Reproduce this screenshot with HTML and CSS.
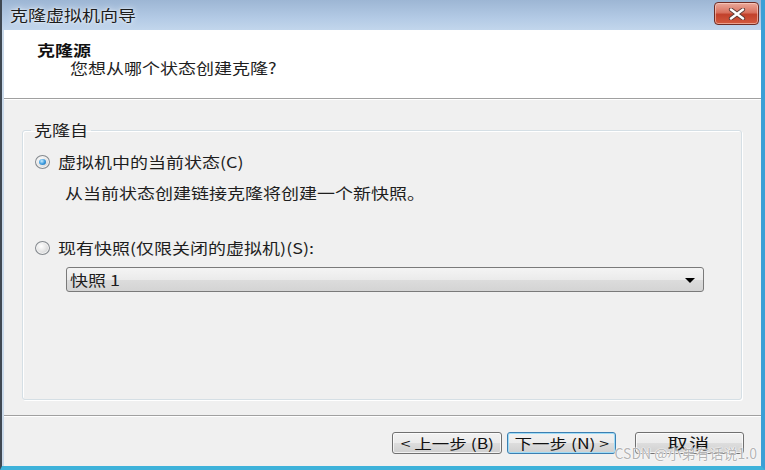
FILE: index.html
```html
<!DOCTYPE html>
<html lang="zh-CN">
<head>
<meta charset="utf-8">
<title>克隆虚拟机向导</title>
<link rel="stylesheet" href="styles.css">
</head>
<body>
<div class="window">
  <div class="titlebar">
    <span class="title t">克隆虚拟机向导</span>
    <button class="close" aria-label="关闭">
      <svg width="20" height="12" viewBox="0 0 20 12">
        <path d="M4 1.5 L16 10.5 M16 1.5 L4 10.5" stroke="#5a3a36" stroke-width="4.2" stroke-linecap="round"/>
        <path d="M4 1.5 L16 10.5 M16 1.5 L4 10.5" stroke="#ffffff" stroke-width="2.4" stroke-linecap="round"/>
      </svg>
    </button>
  </div>
  <div class="client">
    <div class="header">
      <div class="h-title"><span class="t">克隆源</span></div>
      <div class="h-sub"><span class="t">您想从哪个状态创建克隆?</span></div>
    </div>
    <div class="body">
      <fieldset class="group">
        <legend><span class="t">克隆自</span></legend>
        <label class="radio-row first">
          <span class="radio checked"></span>
          <span class="radio-text t">虚拟机中的当前状态(C)</span>
        </label>
        <div class="desc"><span class="t">从当前状态创建链接克隆将创建一个新快照。</span></div>
        <label class="radio-row second">
          <span class="radio"></span>
          <span class="radio-text t">现有快照(仅限关闭的虚拟机)(S):</span>
        </label>
        <div class="combo">
          <span class="combo-text"><span class="t">快照 1</span></span>
          <span class="combo-arrow"></span>
        </div>
      </fieldset>
    </div>
    <div class="footer">
      <button class="btn"><span class="bt">&lt; 上一步 (B)</span></button>
      <button class="btn default"><span class="bt">下一步 (N) &gt;</span></button>
      <button class="btn cancel"><span class="bt">取消</span></button>
    </div>
  </div>
  <div class="watermark">CSDN @小弟有话说1.0</div>
</div>
</body>
</html>
```
FILE: styles.css
```css
html, body {
  margin: 0;
  padding: 0;
  background: #ffffff;
}

body {
  font-family: "Noto Sans CJK SC", "Noto Sans", sans-serif;
  color: #1e1e1e;
}

/* horizontally stretched text, as in the reference capture */
.t {
  display: inline-block;
  transform: scaleX(1.2);
  transform-origin: left center;
  white-space: nowrap;
}

.window {
  position: relative;
  width: 765px;
  height: 470px;
  box-sizing: border-box;
  display: flex;
  flex-direction: column;
  border-left: 2px solid #3f4852;
  border-right: 4px solid #3b9fd6;
  border-bottom: 4px solid #3eb2da;
  overflow: hidden;
}

.titlebar {
  height: 30px;
  flex: none;
  display: flex;
  align-items: flex-start;
  background: linear-gradient(#9db6d4, #b3cae5 60%, #c2d6ec);
}

.title {
  margin: 5px 0 0 8px;
  font-size: 15px;
  line-height: 20px;
  color: #1c1c1c;
  text-shadow: 0 0 6px rgba(255, 255, 255, 0.9), 0 0 2px rgba(255, 255, 255, 0.8);
}

.close {
  margin: 2px 2px 0 auto;
  width: 45px;
  height: 23px;
  padding: 0;
  border: 1px solid #6e2d25;
  border-radius: 4px;
  background: linear-gradient(#eaa99b, #d9725f 45%, #c2412b 55%, #d35a3e);
  box-shadow: inset 0 0 0 1px rgba(255, 220, 210, 0.55);
  display: flex;
  align-items: center;
  justify-content: center;
}

.client {
  flex: 1;
  display: flex;
  flex-direction: column;
  border-left: 2px solid #c9d9ea;
  background: #f0f0f0;
}

.header {
  flex: none;
  background: #ffffff;
  border-bottom: 1px solid #a0a0a0;
  box-shadow: 0 1px 0 #ffffff;
  padding: 11px 0 0 33px;
  box-sizing: border-box;
  height: 69px;
}

.h-title {
  font-size: 15px;
  line-height: 17px;
  font-weight: bold;
  color: #111;
}

.h-sub {
  font-size: 15px;
  line-height: 17px;
  padding-left: 33px;
  margin-top: 1px;
}

.body {
  flex: 1;
  display: flex;
  flex-direction: column;
  padding: 22px 19px 15px 18px;
  box-sizing: border-box;
}

.group {
  margin: 0;
  padding: 0;
  width: 720px;
  box-sizing: border-box;
  flex: 1;
  border: 1px solid #d5dfe5;
  border-radius: 3px;
  box-shadow: inset 1px 1px 0 #ffffff, 1px 1px 0 #ffffff;
  min-width: 0;
}

.group legend {
  margin-left: 8px;
  padding: 0 12px 0 3px;
  font-size: 15px;
  line-height: 18px;
}

.radio-row {
  display: flex;
  align-items: center;
  height: 20px;
  padding-left: 12px;
}

.radio-row.first {
  margin-top: 13px;
}

.radio-row.second {
  margin-top: 35px;
}

.radio-text {
  margin-left: 8px;
  font-size: 15px;
  line-height: 20px;
}

.radio {
  width: 15px;
  height: 14px;
  box-sizing: border-box;
  border-radius: 50%;
  border: 1px solid #858a8f;
  background: radial-gradient(circle at 40% 35%, #ffffff, #e4e4e4 50%, #bfc2c5);
  box-shadow: inset 0 0 0 1px #f4f4f4;
  position: relative;
  flex: none;
}

.radio.checked::after {
  content: "";
  position: absolute;
  left: 3px;
  top: 3px;
  width: 7px;
  height: 6px;
  border-radius: 50%;
  background: radial-gradient(circle at 40% 35%, #c8ecff, #3f9ee0 50%, #145a9c);
}

.desc {
  margin-top: 11px;
  padding-left: 42px;
  font-size: 15px;
  line-height: 20px;
}

.combo {
  margin: 9px 0 0 43px;
  width: 638px;
  height: 25px;
  box-sizing: border-box;
  border: 1px solid #7a7a7a;
  border-radius: 3px;
  background: linear-gradient(#f4f4f4, #ebebeb 50%, #dcdcdc 51%, #d4d4d4);
  display: flex;
  align-items: center;
  padding: 0 8px 0 3px;
}

.combo-text {
  font-size: 15px;
  line-height: 20px;
  flex: 1;
}

.combo-arrow {
  width: 0;
  height: 0;
  border-left: 5px solid transparent;
  border-right: 5px solid transparent;
  border-top: 5px solid #000;
  margin-top: 2px;
}

.footer {
  height: 51px;
  flex: none;
  box-sizing: border-box;
  border-top: 1px solid #a0a0a0;
  box-shadow: inset 0 1px 0 #ffffff;
  display: flex;
  align-items: flex-start;
  padding: 16px 0 0 388px;
}

.btn {
  width: 110px;
  height: 22px;
  box-sizing: border-box;
  padding: 0;
  border: 1px solid #707070;
  border-radius: 3px;
  background: linear-gradient(#f2f2f2, #ebebeb 50%, #dddddd 51%, #cfcfcf);
  box-shadow: inset 0 0 0 1px rgba(255, 255, 255, 0.7);
  font-family: "Noto Sans CJK SC", "Noto Sans", sans-serif;
  font-size: 14px;
  line-height: 18px;
  color: #111;
}

.bt {
  display: inline-block;
  transform: scaleX(1.25);
  transform-origin: center;
  white-space: nowrap;
}

.btn.default {
  margin-left: 5px;
  width: 109px;
  border-color: #3c7fb1;
  box-shadow: inset 0 0 0 1px #9fdcf7;
}

.btn.cancel {
  margin-left: 19px;
  width: 109px;
  font-size: 15px;
}

.btn.cancel .bt {
  letter-spacing: 1px;
  transform: scaleX(1.35);
}

.watermark {
  position: absolute;
  right: 4px;
  bottom: 4px;
  font-size: 14px;
  line-height: 18px;
  color: rgba(175, 175, 175, 0.95);
  text-shadow: 0 0 2px #fff, 0 0 1px #fff, 0 0 1px #fff;
}
```
